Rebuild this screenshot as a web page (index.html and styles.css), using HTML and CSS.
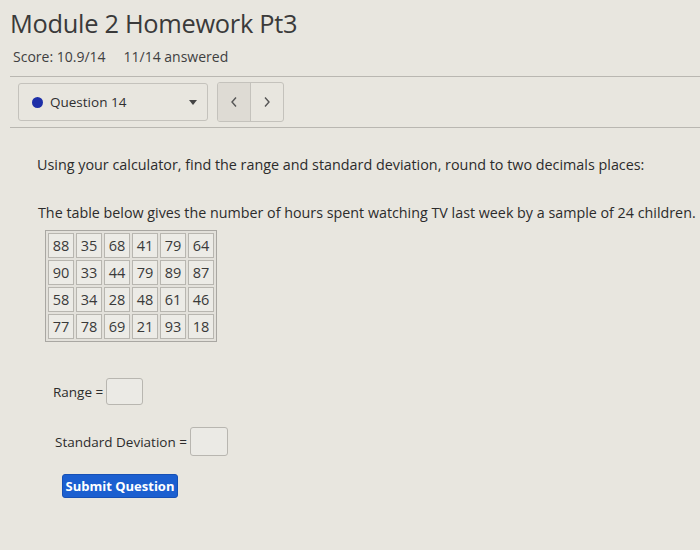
FILE: index.html
```html
<!DOCTYPE html>
<html>
<head>
<meta charset="utf-8">
<link rel="stylesheet" href="styles.css">
</head>
<body>
<div class="page">
  <h1 class="title">Module 2 Homework Pt3</h1>
  <div class="score"><span>Score: 10.9/14</span><span>11/14 answered</span></div>
  <div class="navbar">
    <div class="qselect">
      <span class="dot"></span>
      <span class="qlabel">Question 14</span>
      <span class="caret"></span>
    </div>
    <div class="arrows">
      <span class="arrow prev"><svg width="8" height="12" viewBox="0 0 8 12"><path d="M6 1.5 L2 6 L6 10.5" fill="none" stroke="#555" stroke-width="1.4"/></svg></span>
      <span class="arrow next"><svg width="8" height="12" viewBox="0 0 8 12"><path d="M2 1.5 L6 6 L2 10.5" fill="none" stroke="#555" stroke-width="1.4"/></svg></span>
    </div>
  </div>
  <div class="question">
    <p class="p1">Using your calculator, find the range and standard deviation, round to two decimals places:</p>
    <p class="p2">The table below gives the number of hours spent watching TV last week by a sample of 24 children.</p>
    <table class="data">
      <tr><td>88</td><td>35</td><td>68</td><td>41</td><td>79</td><td>64</td></tr>
      <tr><td>90</td><td>33</td><td>44</td><td>79</td><td>89</td><td>87</td></tr>
      <tr><td>58</td><td>34</td><td>28</td><td>48</td><td>61</td><td>46</td></tr>
      <tr><td>77</td><td>78</td><td>69</td><td>21</td><td>93</td><td>18</td></tr>
    </table>
    <div class="answer range"><span>Range =</span><span class="box"></span></div>
    <div class="answer sd"><span>Standard Deviation =</span><span class="box tall"></span></div>
    <button class="submit">Submit Question</button>
  </div>
</div>
</body>
</html>
```
FILE: styles.css
```css
html, body {
  margin: 0;
  padding: 0;
  background: #e8e6df;
}
body {
  font-family: "Open Sans", "Liberation Sans", sans-serif;
  color: #333;
  width: 700px;
  height: 550px;
  overflow: hidden;
}
.page {
  padding: 6px 0 0 0;
}
.title {
  margin: 0 0 0 10px;
  font-size: 25.4px;
  font-weight: 400;
  color: #3a3a3a;
  line-height: 34px;
  letter-spacing: -0.3px;
}
.score {
  margin: 7px 0 0 13px;
  font-size: 14px;
  color: #3f3f3f;
  display: flex;
  gap: 18px;
  line-height: 20px;
}
.navbar {
  margin-top: 9px;
  margin-left: 10px;
  border-top: 1px solid #b9b7b1;
  border-bottom: 1px solid #b9b7b1;
  display: flex;
  align-items: center;
  gap: 9px;
  padding: 5px 0 5px 8px;
}
.qselect {
  width: 190px;
  height: 38px;
  box-sizing: border-box;
  border: 1px solid #c4c2bc;
  border-radius: 3px;
  display: flex;
  align-items: center;
  padding: 0 10px 0 13px;
}
.dot {
  width: 11px;
  height: 11px;
  border-radius: 50%;
  background: #1d2fa8;
  margin-right: 7px;
}
.qlabel {
  font-size: 13.5px;
  color: #2f2f2f;
  flex: 1;
}
.caret {
  width: 0;
  height: 0;
  border-left: 4px solid transparent;
  border-right: 4px solid transparent;
  border-top: 5px solid #444;
}
.arrows {
  display: flex;
  height: 38px;
  border: 1px solid #c4c2bc;
  border-radius: 3px;
  overflow: hidden;
}
.arrow {
  width: 32px;
  display: flex;
  align-items: center;
  justify-content: center;
}
.prev {
  background: #dedbd4;
  border-right: 1px solid #c4c2bc;
}
.question {
  padding: 27px 0 0 37px;
  color: #2c2c2c;
  white-space: nowrap;
}
.question p {
  margin: 0;
  line-height: 20px;
}
.p1 {
  font-size: 14.35px;
}
.p2 {
  font-size: 14.3px;
  margin-top: 28px !important;
  margin-left: 1px !important;
}
.data {
  margin: 7px 0 0 8px;
  border: 1px solid #a9a7a2;
  border-spacing: 2px;
  background: #e3e1db;
}
.data td {
  width: 20px;
  height: 21px;
  padding: 1px 2px;
  border: 1px solid #b8b6b0;
  background: #ecebe6;
  font-size: 14.5px;
  text-align: center;
  color: #3a3a3a;
}
.answer {
  display: flex;
  align-items: center;
  gap: 3px;
  font-size: 13.5px;
}
.range {
  margin: 36px 0 0 16px;
}
.sd {
  margin: 22px 0 0 18px;
}
.box {
  width: 37px;
  height: 27px;
  box-sizing: border-box;
  border: 1px solid #b8b6b0;
  border-radius: 3px;
  background: #ebeae5;
}
.box.tall {
  width: 38px;
  height: 29px;
}
.submit {
  margin: 18px 0 0 25px;
  background: #1b5fd0;
  color: #fff;
  font-family: "Open Sans", "Liberation Sans", sans-serif;
  font-weight: 700;
  font-size: 13px;
  border: 1px solid #1650b5;
  border-radius: 3px;
  padding: 0;
  width: 116px;
  height: 24px;
  display: block;
  white-space: nowrap;
}
```
